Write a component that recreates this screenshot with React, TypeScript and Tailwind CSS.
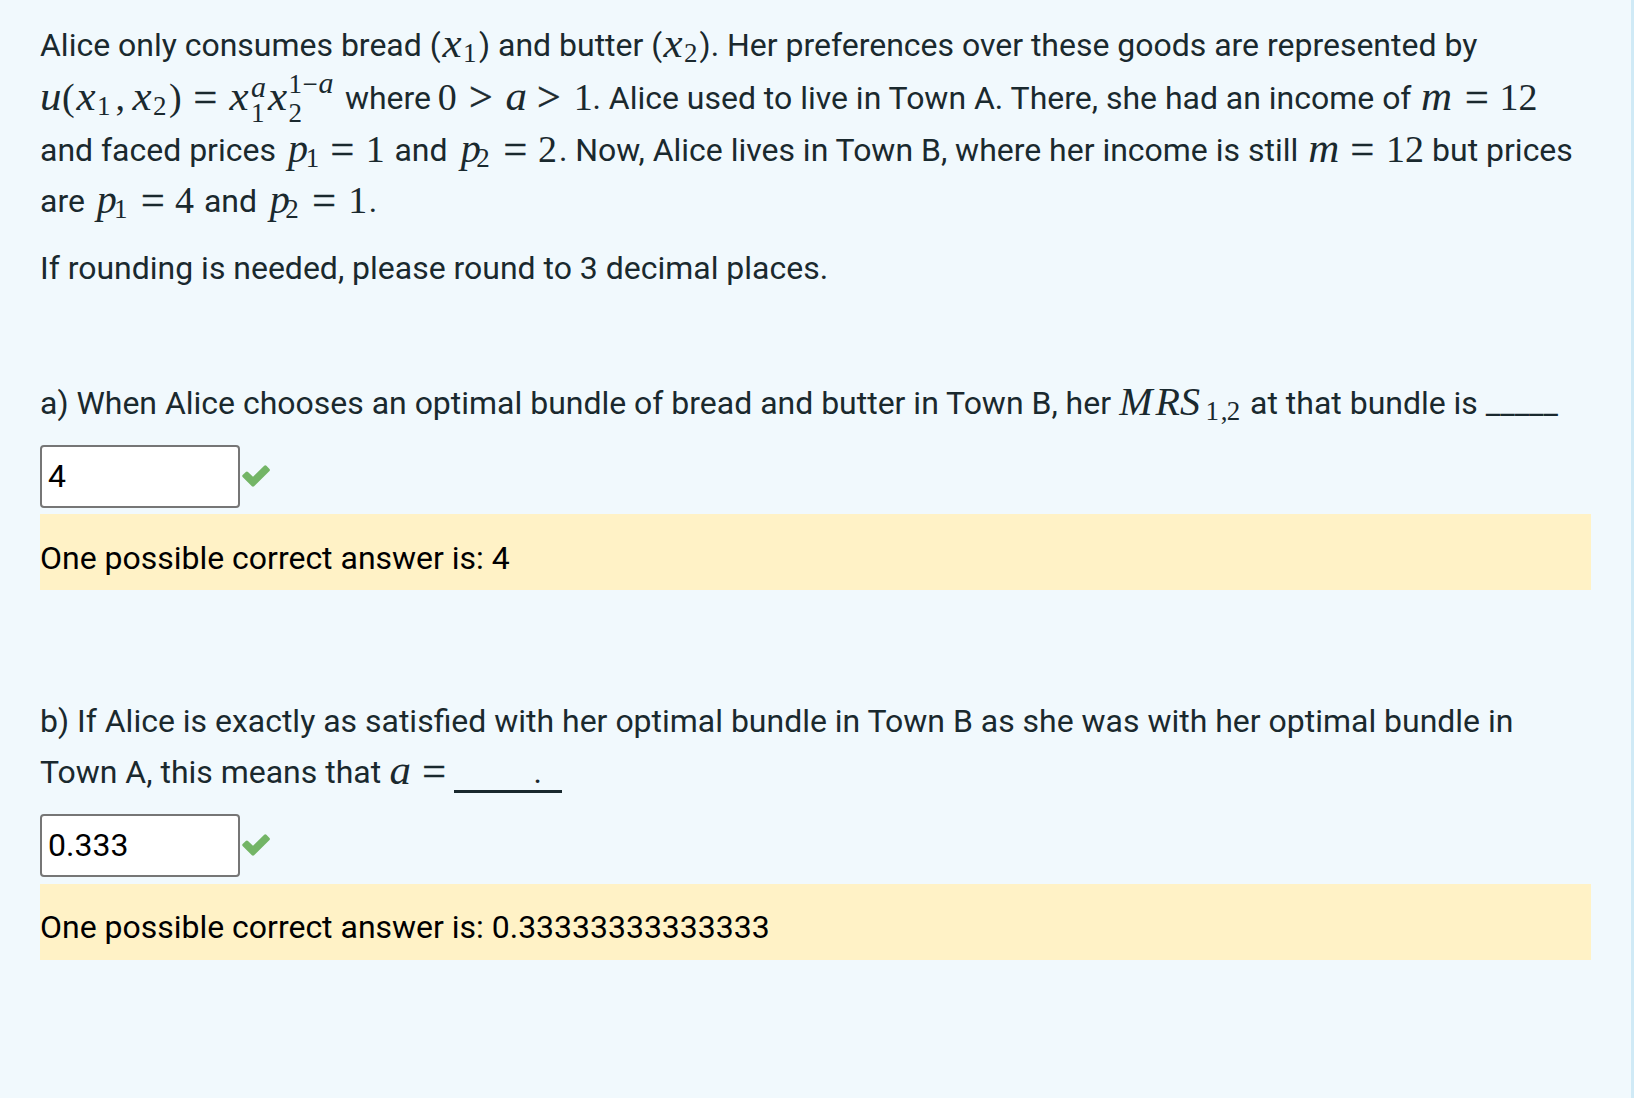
import type { ReactNode } from "react";

const styles = {
  text: "",
  variable: "font-[Liberation_Serif] italic text-[43px] leading-[0] align-[-1px]",
  narrow: "font-[Liberation_Serif] italic text-[40px] leading-[0] align-[-1px]",
  capital: "font-[Liberation_Serif] italic text-[40px] leading-[0] align-[-1px]",
  number: "font-[Liberation_Serif] text-[38px] leading-[0] align-[-1px]",
  operator: "font-[Liberation_Serif] text-[42px] leading-[0] align-[-2px] [-webkit-text-stroke:0.5px_#1a292e]",
  sub: "font-[Liberation_Serif] text-[27px] leading-[0] align-[-6px]",
  lowSub: "font-[Liberation_Serif] text-[27px] leading-[0] align-[-13px]",
  sup: "font-[Liberation_Serif] italic text-[30px] leading-[0] align-[12px]",
  highSup: "font-[Liberation_Serif] italic text-[30px] leading-[0] align-[16px]",
  highSupNumber: "font-[Liberation_Serif] text-[27px] leading-[0] align-[16px]",
};

function S({ k = "text", w = "", children }: { k?: keyof typeof styles; w?: string; children: ReactNode }) {
  return <span className={`inline-block ${styles[k]} ${w}`}>{children}</span>;
}

function Line({ className = "", children }: { className?: string; children: ReactNode }) {
  return <div className={`h-12 whitespace-pre leading-[48px] ${className}`}>{children}</div>;
}

function Answer({ value, className }: { value: string; className: string }) {
  return (
    <div className={`flex items-center ${className}`}>
      <input
        readOnly
        value={value}
        className="h-[63px] w-[200px] rounded-[4px] border-2 border-[#767676] bg-white px-1.5 pb-px text-[32px] text-black outline-none"
      />
      <svg viewBox="0 0 28 22" className="mb-px ml-[2px] h-[22px] w-7 shrink-0 fill-[#73b566]">
        <path d="M.6 10.1 3.8 6.9Q4.9 5.9 6 6.9L11 11.8 22.2.8Q23.3-.2 24.4.8L27.5 4Q28.4 5 27.5 6L12.1 21.2Q11 22.1 9.9 21.2L.6 12.1Q-.2 11.1.6 10.1Z" />
      </svg>
    </div>
  );
}

function Feedback({ className, children }: { className: string; children: ReactNode }) {
  return <div className={`h-[76px] bg-[#fff2c6] text-black leading-[48px] ${className}`}>{children}</div>;
}

export default function App() {
  return (
    <main className="flex h-[1098px] w-[1634px] flex-col overflow-hidden border-r-[3px] border-[#d0eaf6] bg-[#f1f9fd] pt-[21px] pr-10 pl-10 font-[Roboto] text-[31.98px] text-[#1a292e]">
      <Line>
        <S w="w-[402.5px]">Alice only consumes bread (</S>
        <S k="variable" w="w-[20.5px]">x</S>
        <S k="sub" w="w-[16px]">1</S>
        <S w="w-[184.5px]">) and butter (</S>
        <S k="variable" w="w-[20.5px]">x</S>
        <S k="sub" w="w-[15.5px]">2</S>
        <S>). Her preferences over these goods are represented by</S>
      </Line>
      <Line className="mt-[5px]">
        <S k="variable" w="w-[22px]">u</S>
        <S k="number" w="w-[14.5px]">(</S>
        <S k="variable" w="w-[20.5px]">x</S>
        <S k="sub" w="w-[18.4px]">1</S>
        <S k="number" w="w-[17.1px]">,</S>
        <S k="variable" w="w-[20.5px]">x</S>
        <S k="sub" w="w-[16px]">2</S>
        <S k="number" w="w-[24.4px]">)</S>
        <S k="operator" w="w-[36.1px]">=</S>
        <S k="variable" w="w-[21.5px]">x</S>
        <S k="sup" w="w-0">a</S>
        <S k="lowSub" w="w-[17px]">1</S>
        <S k="variable" w="w-[20.5px]">x</S>
        <S k="lowSub" w="w-0">2</S>
        <S k="highSupNumber" w="w-[14px]">1</S>
        <S k="highSupNumber" w="w-[16px]">−</S>
        <S k="highSup" w="w-[26.5px]">a</S>
        <S w="w-[92.7px]">where</S>
        <S k="number" w="w-[31.3px]">0</S>
        <S k="operator" w="w-[36.5px]">&gt;</S>
        <S k="variable" w="w-[31.5px]">a</S>
        <S k="operator" w="w-[36.8px]">&gt;</S>
        <S k="number" w="w-[18.7px]">1</S>
        <S w="w-[828.5px]">. Alice used to live in Town A. There, she had an income of</S>
        <S k="variable" w="w-[44px]">m</S>
        <S k="operator" w="w-[34.5px]">=</S>
        <S k="number">12</S>
      </Line>
      <Line className="mt-1">
        <S w="w-[248px]">and faced prices</S>
        <S k="narrow" w="w-[17.7px]">p</S>
        <S k="sub" w="w-[24.7px]">1</S>
        <S k="operator" w="w-[35.4px]">=</S>
        <S k="number" w="w-[28.7px]">1</S>
        <S w="w-[66.4px]">and</S>
        <S k="narrow" w="w-[15.5px]">p</S>
        <S k="sub" w="w-[27.1px]">2</S>
        <S k="operator" w="w-[34.5px]">=</S>
        <S k="number" w="w-[21px]">2</S>
        <S w="w-[749.2px]">. Now, Alice lives in Town B, where her income is still</S>
        <S k="variable" w="w-[42.3px]">m</S>
        <S k="operator" w="w-[35.5px]">=</S>
        <S k="number" w="w-[46.2px]">12</S>
        <S>but prices</S>
      </Line>
      <Line className="mt-[3px]">
        <S w="w-[56.8px]">are</S>
        <S k="narrow" w="w-[17.2px]">p</S>
        <S k="sub" w="w-[27px]">1</S>
        <S k="operator" w="w-[34px]">=</S>
        <S k="number" w="w-[29px]">4</S>
        <S w="w-[65.8px]">and</S>
        <S k="narrow" w="w-[15.5px]">p</S>
        <S k="sub" w="w-[27px]">2</S>
        <S k="operator" w="w-[35.9px]">=</S>
        <S k="number" w="w-[20.5px]">1</S>
        <S>.</S>
      </Line>
      <Line className="mt-[19px]">If rounding is needed, please round to 3 decimal places.</Line>

      <Line className="mt-[87px]">
        <S w="w-[1079.2px]">a) When Alice chooses an optimal bundle of bread and butter in Town B, her</S>
        <S k="capital" w="w-[36.3px]">M</S>
        <S k="capital" w="w-[24.5px]">R</S>
        <S k="capital" w="w-[25.5px]">S</S>
        <S k="sub" w="w-[15.3px]">1</S>
        <S k="sub" w="w-[5.9px]">,</S>
        <S k="sub" w="w-[23.4px]">2</S>
        <S>at that bundle is _____</S>
      </Line>
      <Answer value="4" className="mt-[18px]" />
      <Feedback className="mt-[6px] pt-5">One possible correct answer is: 4</Feedback>

      <Line className="mt-[107px]">b) If Alice is exactly as satisfied with her optimal bundle in Town B as she was with her optimal bundle in</Line>
      <Line className="mt-[3px]">
        <S w="w-[349.6px]">Town A, this means that</S>
        <S k="variable" w="w-[32.7px]">a</S>
        <S k="operator" w="w-[32px]">=</S>
        <span className="inline-block w-[107.8px] border-b-[3px] border-[#1a292e] pb-[18px] pl-[79.2px] leading-[0]">.</span>
      </Line>
      <Answer value="0.333" className="mt-[18px]" />
      <Feedback className="mt-[7px] pt-[19px]">One possible correct answer is: 0.33333333333333</Feedback>
    </main>
  );
}
